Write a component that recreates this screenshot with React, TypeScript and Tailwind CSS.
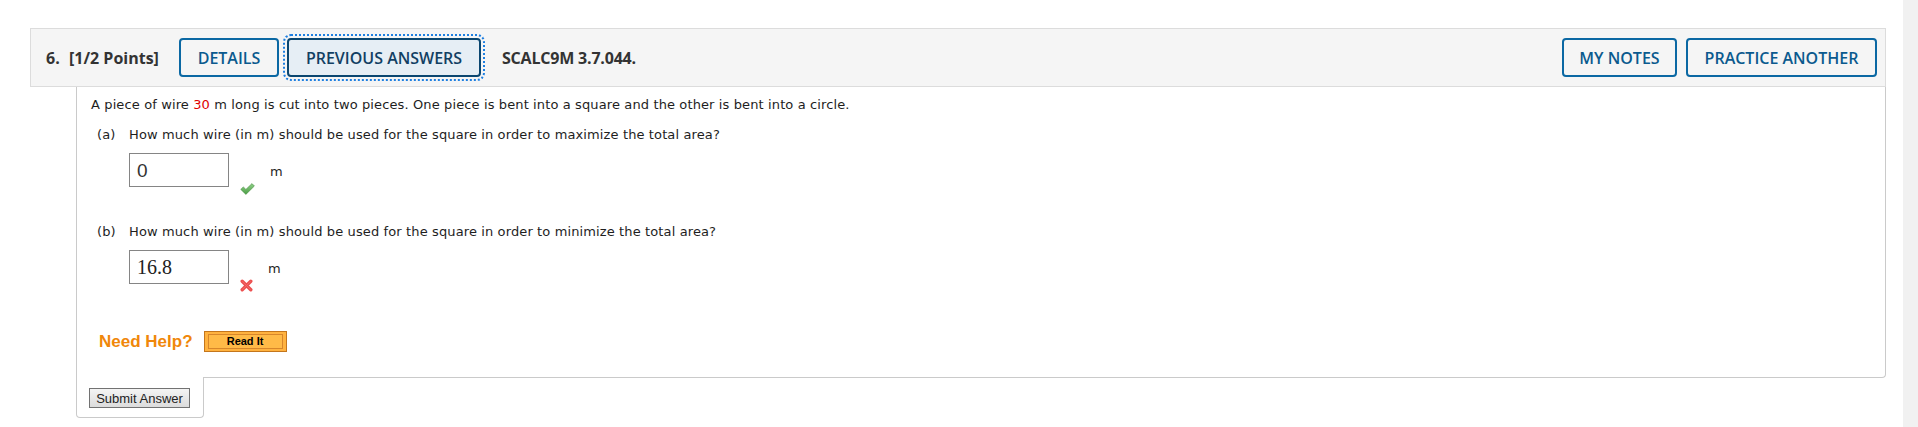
import React from "react";

function CheckIcon() {
  return (
    <svg width="15" height="12" viewBox="0 0 15 12">
      <defs>
        <linearGradient id="gck" x1="0" y1="0" x2="0" y2="1">
          <stop offset="0" stopColor="#8fd088" />
          <stop offset="1" stopColor="#4b9e45" />
        </linearGradient>
      </defs>
      <path d="M0.8 6.4 L3.3 3.9 L5.9 6.4 L12 0.6 L14.4 3 L5.9 11.4 Z" fill="url(#gck)" stroke="#4a8f43" strokeWidth="0.6" strokeLinejoin="round" />
    </svg>
  );
}

function XIcon() {
  return (
    <svg width="13" height="13" viewBox="0 0 13 13">
      <path d="M2.2 2.2 L10.8 10.8 M10.8 2.2 L2.2 10.8" stroke="#ec5050" strokeWidth="3.4" strokeLinecap="round" />
      <path d="M2.6 2.6 L10.4 10.4 M10.4 2.6 L2.6 10.4" stroke="#f57a7a" strokeWidth="1" strokeLinecap="round" opacity="0.6" />
    </svg>
  );
}

export default function App() {
  return (
    <div className="flex w-[1918px] h-[427px] bg-white overflow-hidden">
      <div className="flex-1 pl-[30px] pr-[17px] pt-[28px]">
        {/* header */}
        <div className="flex items-center h-[59px] border border-[#dcdcdc] bg-[#f5f5f5] pl-[15px] pr-[8px] font-['Open_Sans',sans-serif]">
          <span className="w-[23px] text-[16px] font-bold text-[#333] whitespace-nowrap">6.</span>
          <span className="w-[110px] text-[16px] font-bold text-[#333] whitespace-nowrap">[1/2 Points]</span>
          <div className="flex items-center justify-center w-[100px] h-[39px] rounded-[4px] border-2 border-[#0b68a3] text-[#0b5a8e] text-[16px] font-semibold">
            DETAILS
          </div>
          <div className="ml-[8px] flex items-center justify-center w-[194px] h-[39px] rounded-[4px] border-2 border-[#0a4670] bg-[#e6eef5] text-[#123f63] text-[16px] font-semibold outline-2 outline-dotted outline-offset-2 outline-[#1e7fe0]">
            PREVIOUS ANSWERS
          </div>
          <span className="ml-[21px] text-[16px] font-bold tracking-[-0.2px] text-[#333] whitespace-nowrap">SCALC9M 3.7.044.</span>
          <div className="ml-auto flex items-center justify-center w-[115px] h-[39px] rounded-[4px] border-2 border-[#0b68a3] text-[#0b5a8e] text-[16px] font-semibold">
            MY NOTES
          </div>
          <div className="ml-[9px] flex items-center justify-center w-[191px] h-[39px] rounded-[4px] border-2 border-[#0b68a3] text-[#0b5a8e] text-[16px] font-semibold">
            PRACTICE ANOTHER
          </div>
        </div>

        {/* content */}
        <div className="ml-[46px]">
          <div className="border-l border-r border-b border-[#cacaca] rounded-br-[4px] bg-white pt-[10px] pl-[14px] pb-[25px] font-['DejaVu_Sans',sans-serif] text-[13px] leading-[15px] tracking-[0.12px] text-[#1e1e1e]">
            <p className="whitespace-nowrap">
              A piece of wire <span className="text-[#e00000]">30</span> m long is cut into two pieces. One piece is bent into a square and the other is bent into a circle.
            </p>

            <div className="mt-[15px] flex ml-[6px] whitespace-nowrap">
              <span className="w-[32px]">(a)</span>
              <span>How much wire (in m) should be used for the square in order to maximize the total area?</span>
            </div>
            <div className="mt-[11px] ml-[38px] flex items-start">
              <div className="w-[100px] h-[34px] border border-[#858585] bg-white flex items-center pl-[7px] font-['Liberation_Sans',sans-serif] text-[19px] tracking-normal text-[#333]">
                0
              </div>
              <div className="ml-[11px] mt-[30px] w-[15px] h-[12px] flex">
                <CheckIcon />
              </div>
              <span className="ml-[15px] mt-[11px]">m</span>
            </div>

            <div className="mt-[29px] flex ml-[6px] whitespace-nowrap">
              <span className="w-[32px]">(b)</span>
              <span>How much wire (in m) should be used for the square in order to minimize the total area?</span>
            </div>
            <div className="mt-[11px] ml-[38px] flex items-start">
              <div className="w-[100px] h-[34px] border border-[#858585] bg-white flex items-center pl-[7px] font-['Liberation_Serif',serif] text-[20px] tracking-normal text-[#222]">
                16.8
              </div>
              <div className="ml-[11px] mt-[29px] w-[13px] h-[13px] flex">
                <XIcon />
              </div>
              <span className="ml-[15px] mt-[11px]">m</span>
            </div>

            <div className="mt-[39px] ml-[8px] flex items-center h-[21px] tracking-normal">
              <span className="font-['Liberation_Sans',sans-serif] font-bold text-[17px] leading-[20px] text-[#f0870a]">Need Help?</span>
              <div className="ml-[11px] w-[83px] h-[21px] border border-[#c4761c] bg-[#ffb23f] px-[3px] py-[2px] flex">
                <div className="flex-1 border border-[#d7862a] bg-[#ffba47] flex items-center justify-center font-['Liberation_Sans',sans-serif] font-bold text-[11px] leading-none text-black">
                  Read It
                </div>
              </div>
            </div>
          </div>

          <div className="-mt-px w-[128px] border-l border-r border-b border-[#cacaca] rounded-b-[4px] bg-white pt-[11px] pb-[9px] pl-[12px]">
            <div className="w-[101px] h-[20px] border border-[#727272] bg-gradient-to-b from-[#f4f4f4] to-[#dcdcdc] flex items-center justify-center font-['Liberation_Sans',sans-serif] text-[13px] leading-none text-[#222]">
              Submit Answer
            </div>
          </div>
        </div>
      </div>
      <div className="w-[15px] h-[427px] bg-[#f1f1f1]" />
    </div>
  );
}
